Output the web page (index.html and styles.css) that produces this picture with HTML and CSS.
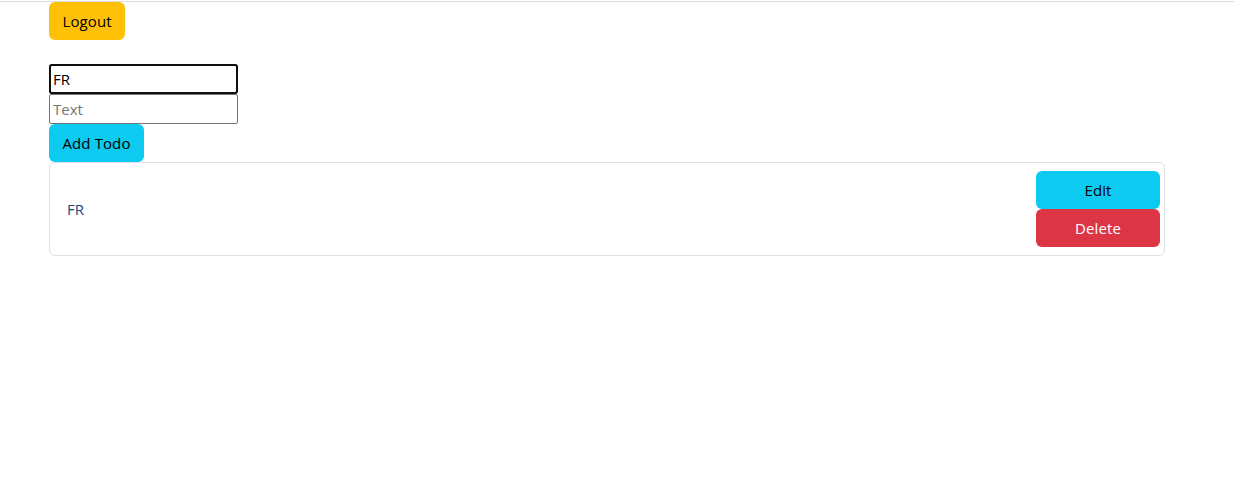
FILE: index.html
```html
<!DOCTYPE html>
<html>
<head>
<meta charset="utf-8">
<link rel="stylesheet" href="styles.css">
</head>
<body>
<div class="topline"></div>
<main class="container">
  <button class="btn btn-warning">Logout</button>
  <form class="todo-form">
    <input class="field field-focus" type="text" value="FR">
    <input class="field" type="text" placeholder="Text">
    <button type="button" class="btn btn-info">Add Todo</button>
  </form>
  <div class="card">
    <span class="todo-text">FR</span>
    <div class="actions">
      <button class="btn btn-info wide">Edit</button>
      <button class="btn btn-danger wide">Delete</button>
    </div>
  </div>
</main>
</body>
</html>
```

FILE: styles.css
```css
* { box-sizing: border-box; }
html, body { margin: 0; padding: 0; background: #fff; }
body {
  font-family: "Open Sans", "Noto Sans", "Liberation Sans", sans-serif;
  font-size: 16px;
  color: #212529;
}
.topline { height: 1px; background: #dcdcdc; margin-top: 1px; }
.container {
  width: 1116px;
  margin-left: 49px;
  display: flex;
  flex-direction: column;
  align-items: flex-start;
}
.btn {
  border: none;
  border-radius: 6px;
  font-family: inherit;
  font-size: 15px;
  height: 38px;
  padding: 0 13.5px;
  color: #000;
  letter-spacing: 0.1px;
  cursor: pointer;
}
.btn-warning { background: #ffc107; }
.btn-info { background: #0dcaf0; }
.btn-danger { background: #dc3545; color: #fff; }
.todo-form {
  margin-top: 24px;
  display: flex;
  flex-direction: column;
  align-items: flex-start;
}
.field {
  width: 189px;
  height: 30px;
  border: 1px solid #767676;
  border-radius: 2px;
  padding: 0 3px;
  font-family: inherit;
  font-size: 15px;
  color: #000;
  margin: 0;
}
.field::placeholder { color: #757575; }
.field-focus {
  outline: 2px solid #101010;
  outline-offset: -2px;
  border-radius: 3px;
}
.card {
  width: 1116px;
  height: 94px;
  border: 1px solid #dee2e6;
  border-radius: 6px;
  display: flex;
  align-items: center;
  justify-content: space-between;
  padding: 8px 4px 8px 17px;
}
.todo-text { color: #164a78; font-size: 15px; }
.actions { display: flex; flex-direction: column; }
.wide { width: 124px; }
```
